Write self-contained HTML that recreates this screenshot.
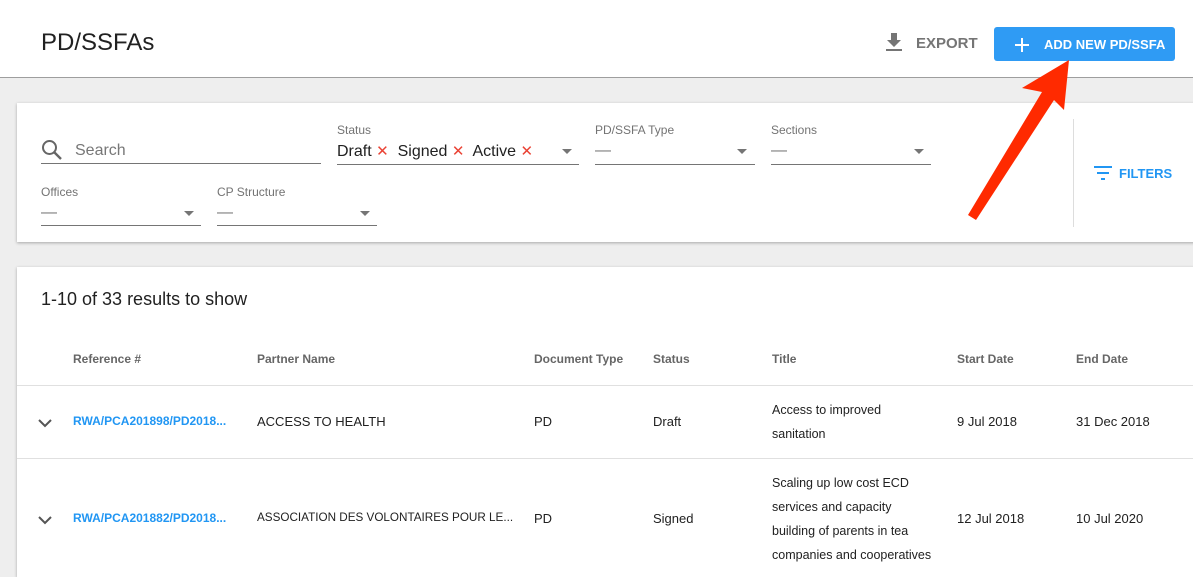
<!DOCTYPE html>
<html><head><style>
*{margin:0;padding:0;box-sizing:border-box}
body{width:1193px;height:570px;overflow:hidden;background:#eeeeee;font-family:"Liberation Sans",sans-serif;position:relative;color:#212121}
.abs{position:absolute}
.header{left:0;top:0;width:1193px;height:78px;background:#fff;border-bottom:1px solid #9e9e9e}
.lbl{font-size:12px;color:#737373}
.line{border-bottom:1px solid #757575;height:1px}
.tri{width:0;height:0;border-left:5px solid transparent;border-right:5px solid transparent;border-top:5px solid #757575}
.x{color:#ea4335;font-size:15px}
.th{font-size:12px;color:#666;font-weight:bold}
.td{font-size:13px;color:#212121}
.link{font-size:12px;color:#2196f3;font-weight:bold}
</style></head><body>
<div class="abs header"></div>
<div class="abs" style="left:41px;top:29px;font-size:24px;color:#212121">PD/SSFAs</div>
<svg class="abs" style="left:885px;top:33px" width="18" height="20" viewBox="0 0 18 20"><path d="M6 0h6v7h4l-7 7-7-7h4z" fill="#757575"/><rect x="1" y="16" width="16" height="2" fill="#757575"/></svg>
<div class="abs" style="left:916px;top:35px;font-size:15px;font-weight:bold;color:#757575">EXPORT</div>
<div class="abs" style="left:994px;top:27px;width:181px;height:34px;background:#2f9bf4;border-radius:3px"></div>
<svg class="abs" style="left:1014px;top:37px" width="16" height="16"><path d="M8 1v14M1 8h14" stroke="#fff" stroke-width="2"/></svg>
<div class="abs" style="left:1044px;top:37px;font-size:13px;font-weight:bold;color:#fff">ADD NEW PD/SSFA</div>

<div class="abs" style="left:17px;top:103px;width:1180px;height:139px;background:#fff;box-shadow:0 1px 3px rgba(0,0,0,.3)"></div>
<svg class="abs" style="left:41px;top:139px" width="22" height="22" viewBox="0 0 22 22"><circle cx="8.5" cy="8.5" r="6.5" stroke="#666" stroke-width="2" fill="none"/><path d="M13 13l7 7" stroke="#666" stroke-width="2.4"/></svg>
<div class="abs" style="left:75px;top:142px;font-size:16px;color:#777">Search</div>
<div class="abs line" style="left:41px;top:163px;width:280px"></div>
<div class="abs lbl" style="left:337px;top:123px">Status</div>
<div class="abs" style="left:337px;top:142px;font-size:16px">Draft <span class="x">✕</span>&nbsp; Signed <span class="x">✕</span>&nbsp; Active <span class="x">✕</span></div>
<div class="abs tri" style="left:562px;top:149px"></div>
<div class="abs line" style="left:337px;top:164px;width:242px"></div>
<div class="abs lbl" style="left:595px;top:123px">PD/SSFA Type</div>
<div class="abs" style="left:595px;top:142px;color:#777">—</div>
<div class="abs tri" style="left:737px;top:149px"></div>
<div class="abs line" style="left:595px;top:164px;width:160px"></div>
<div class="abs lbl" style="left:771px;top:123px">Sections</div>
<div class="abs" style="left:771px;top:142px;color:#777">—</div>
<div class="abs tri" style="left:914px;top:149px"></div>
<div class="abs line" style="left:771px;top:164px;width:160px"></div>
<div class="abs lbl" style="left:41px;top:185px">Offices</div>
<div class="abs" style="left:41px;top:204px;color:#777">—</div>
<div class="abs tri" style="left:184px;top:211px"></div>
<div class="abs line" style="left:41px;top:225px;width:160px"></div>
<div class="abs lbl" style="left:217px;top:185px">CP Structure</div>
<div class="abs" style="left:217px;top:204px;color:#777">—</div>
<div class="abs tri" style="left:360px;top:211px"></div>
<div class="abs line" style="left:217px;top:225px;width:160px"></div>
<div class="abs" style="left:1073px;top:119px;width:1px;height:108px;background:#ddd"></div>
<svg class="abs" style="left:1094px;top:166px" width="18" height="14"><path d="M0 1h18M3 7h12M7 13h4" stroke="#2196f3" stroke-width="2"/></svg>
<div class="abs" style="left:1119px;top:166px;font-size:13px;font-weight:bold;color:#2196f3">FILTERS</div>

<div class="abs" style="left:17px;top:267px;width:1180px;height:310px;background:#fff;box-shadow:0 1px 3px rgba(0,0,0,.3)"></div>
<div class="abs" style="left:41px;top:289px;font-size:18px">1-10 of 33 results to show</div>
<div class="abs th" style="left:73px;top:352px">Reference #</div>
<div class="abs th" style="left:257px;top:352px">Partner Name</div>
<div class="abs th" style="left:534px;top:352px">Document Type</div>
<div class="abs th" style="left:653px;top:352px">Status</div>
<div class="abs th" style="left:772px;top:352px">Title</div>
<div class="abs th" style="left:957px;top:352px">Start Date</div>
<div class="abs th" style="left:1076px;top:352px">End Date</div>
<div class="abs" style="left:17px;top:385px;width:1176px;height:1px;background:#e0e0e0"></div>
<div class="abs" style="left:17px;top:458px;width:1176px;height:1px;background:#e0e0e0"></div>
<svg class="abs" style="left:38px;top:418px" width="14" height="10"><path d="M1 2l6 6 6-6" stroke="#555" stroke-width="2" fill="none"/></svg>
<div class="abs link" style="left:73px;top:414px">RWA/PCA201898/PD2018...</div>
<div class="abs td" style="left:257px;top:414px">ACCESS TO HEALTH</div>
<div class="abs td" style="left:534px;top:414px">PD</div>
<div class="abs td" style="left:653px;top:414px">Draft</div>
<div class="abs td" style="left:772px;top:398px;line-height:24px;font-size:12.5px">Access to improved<br>sanitation</div>
<div class="abs td" style="left:957px;top:414px">9 Jul 2018</div>
<div class="abs td" style="left:1076px;top:414px">31 Dec 2018</div>
<svg class="abs" style="left:38px;top:515px" width="14" height="10"><path d="M1 2l6 6 6-6" stroke="#555" stroke-width="2" fill="none"/></svg>
<div class="abs link" style="left:73px;top:511px">RWA/PCA201882/PD2018...</div>
<div class="abs td" style="left:257px;top:511px;font-size:11.7px">ASSOCIATION DES VOLONTAIRES POUR LE...</div>
<div class="abs td" style="left:534px;top:511px">PD</div>
<div class="abs td" style="left:653px;top:511px">Signed</div>
<div class="abs td" style="left:772px;top:471px;line-height:24px;font-size:12.5px">Scaling up low cost ECD<br>services and capacity<br>building of parents in tea<br>companies and cooperatives</div>
<div class="abs td" style="left:957px;top:511px">12 Jul 2018</div>
<div class="abs td" style="left:1076px;top:511px">10 Jul 2020</div>

<svg class="abs" style="left:0;top:0" width="1193" height="570"><path d="M1069 60 L1064 110 L1054 100 L976 220 L968 215 L1042 92 L1022 88 Z" fill="#ff2a00"/></svg>
</body></html>
